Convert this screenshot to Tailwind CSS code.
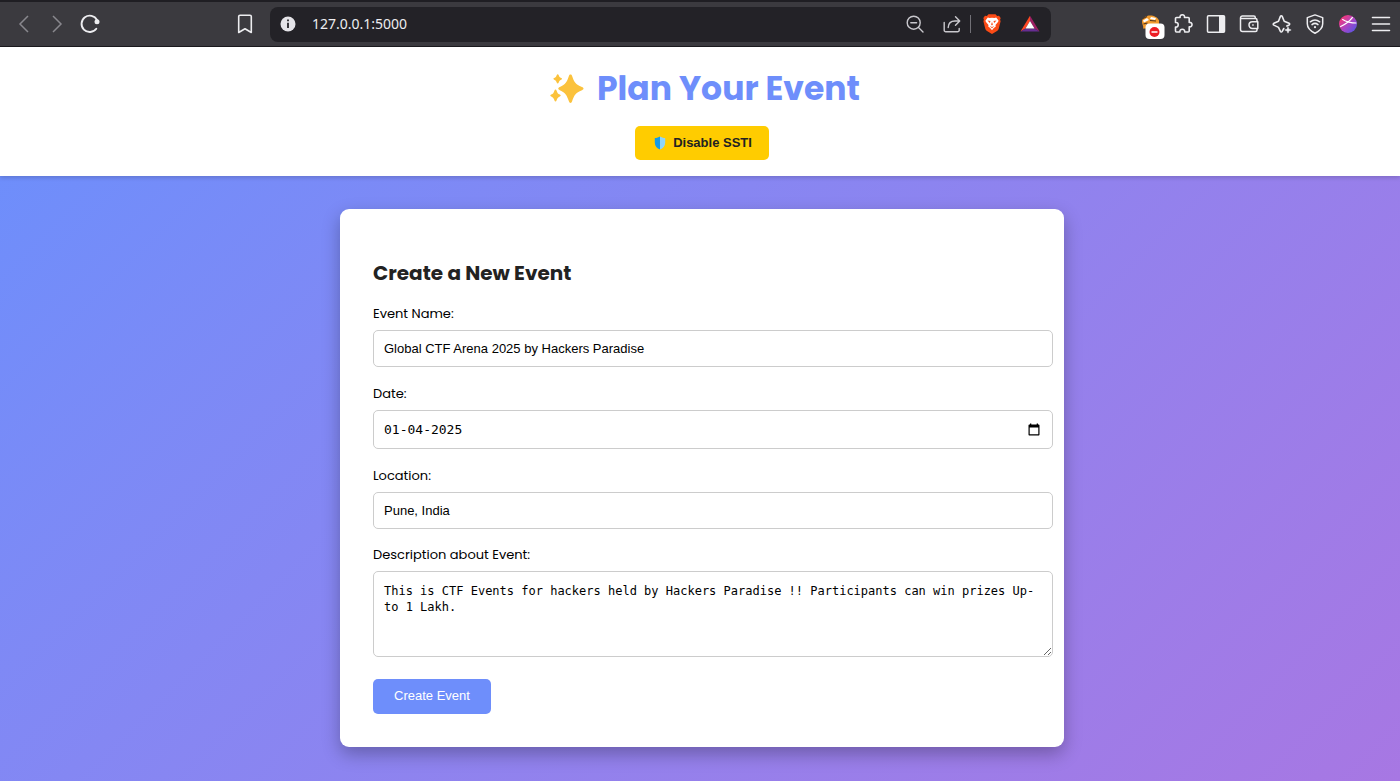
<!DOCTYPE html>
<html lang="en">
<head>
<meta charset="utf-8">
<meta name="viewport" content="width=device-width, initial-scale=1">
<title>Plan Your Event</title>
<script src="https://cdn.jsdelivr.net/npm/@tailwindcss/browser@4"></script>
</head>
<body class="flex min-h-screen flex-col bg-white font-['Poppins','Inter',sans-serif] text-black">

<!-- Browser toolbar -->
<nav aria-label="Browser toolbar" class="flex h-[47px] shrink-0 items-center border-t-2 border-b border-t-[#1f1e23] border-b-[#1b1a1e] bg-[#3b3a3f] text-[#ededf0]">
  <div class="flex w-[270px] shrink-0 items-center pr-[9px] pl-[7px]">
    <button type="button" aria-label="Back" class="flex w-[33px] justify-center text-[#89888e]">
      <svg class="size-5" viewBox="0 0 20 20" fill="none" stroke="currentColor" stroke-width="1.5"><path d="M14 2 6 10l8 8"/></svg>
    </button>
    <button type="button" aria-label="Forward" class="flex w-[33px] justify-center text-[#89888e]">
      <svg class="size-5" viewBox="0 0 20 20" fill="none" stroke="currentColor" stroke-width="1.5"><path d="m6 2 8 8-8 8"/></svg>
    </button>
    <button type="button" aria-label="Reload" class="flex w-[33px] justify-center">
      <svg class="size-5" viewBox="0 0 20 20" fill="none" stroke="currentColor" stroke-width="1.9" stroke-linecap="round"><path d="M16.300 14.800A8.200 8.200 0 1 1 17 6"/><circle cx="17" cy="7.800" r="2.500" fill="currentColor" stroke="none"/></svg>
    </button>
    <button type="button" aria-label="Bookmark" class="ml-auto flex w-[33px] justify-center">
      <svg class="size-5" viewBox="0 0 20 20" fill="none" stroke="currentColor" stroke-width="1.6" stroke-linejoin="round"><path d="M5 1.300h10a1.300 1.300 0 0 1 1.300 1.300v15.900L10 14.800l-6.300 3.700V2.600A1.300 1.300 0 0 1 5 1.300Z"/></svg>
    </button>
  </div>

  <div class="flex h-[35px] min-w-0 flex-1 items-center rounded-lg bg-[#232227] pr-1 pl-2.5">
    <button type="button" aria-label="Site information" class="shrink-0">
      <svg class="size-4" viewBox="0 0 16 16"><circle cx="8" cy="8" r="7.500" fill="#e4e3e8"/><path d="M8 3.400v1.900M8 6.800v5.200" stroke="#232227" stroke-width="1.800"/></svg>
    </button>
    <input aria-label="Address" type="text" value="127.0.0.1:5000" class="ml-4 min-w-0 flex-1 bg-transparent font-['Noto_Sans',sans-serif] text-sm text-[#ededf0] outline-none">
    <button type="button" aria-label="Zoom" class="flex w-[37px] justify-center text-[#c9c8cd]">
      <svg class="size-[18px]" viewBox="0 0 18 18" fill="none" stroke="currentColor" stroke-width="1.400" stroke-linecap="round"><circle cx="7.700" cy="7.700" r="6.500"/><path d="M4.800 7.700h5.800M12.500 12.500l4.500 4.500"/></svg>
    </button>
    <button type="button" aria-label="Share" class="flex w-[37px] justify-center text-[#c9c8cd]">
      <svg class="size-[18px]" viewBox="0 0 18 18" fill="none" stroke="currentColor" stroke-width="1.400" stroke-linecap="round" stroke-linejoin="round"><path d="M1.200 7.500v7.700a1.600 1.600 0 0 0 1.600 1.600h11.800a1.600 1.600 0 0 0 1.600-1.600V13.500"/><path d="M5.200 12.500c.200-4 2.600-6.500 6.800-6.500h4.300M12.500 1.700 16.700 6l-4.200 4.300"/></svg>
    </button>
    <span class="h-[18px] w-px bg-[#717076]"></span>
    <button type="button" aria-label="Brave Shields" class="flex w-[42px] justify-center">
      <svg class="h-5 w-[18px]" viewBox="0 0 18 20"><path fill="#fb4b16" d="M5.500.300h7l1.600 1.700 1.900-.200L17.700 4l-.6 1.700.5 1.600-1.800 7.200c-.3 1.100-.9 1.900-1.800 2.500L9.900 19.600c-.6.400-1.200.400-1.800 0L4 17c-.9-.6-1.500-1.400-1.800-2.500L.4 7.300l.5-1.600L.3 4 2 1.800l1.900.2Z"/><path fill="#fff" d="M9 3.700 6.600 4l-1.800-.4-2.300 3 .3 1.200 2.700 3.100-.3 1.500 2 1.600L9 16.300l1.800-2.300 2-1.600-.3-1.500 2.700-3.100.3-1.200-2.300-3-1.800.4Z"/><path fill="#fb4b16" d="m4.500 6.500 3 .6-.7 1.800ZM13.500 6.500l-3 .6.700 1.800ZM9 8l.9 2.600L9 11.500l-.9-.9ZM6.700 12 9 13l2.300-1L9 14.300Z"/></svg>
    </button>
    <button type="button" aria-label="Brave Rewards" class="flex w-[34px] justify-center">
      <svg class="h-[18px] w-5" viewBox="0 0 20 18"><path fill="#ff4724" d="M10 .8v5.300L5.500 13.500.5 16.500Z"/><path fill="#9e1f63" d="M10 .8v5.300l4.500 7.400 5 3Z"/><path fill="#662d91" d="m.5 16.500 5-3h9l5 3Z"/><path fill="#fff" d="m10 6 4.500 7.500h-9Z"/></svg>
    </button>
  </div>

  <div class="flex w-[349px] shrink-0 items-center justify-end pr-[3px]">
    <button type="button" aria-label="Extension, blocked" class="flex w-6 justify-center">
      <svg class="h-6 w-6 overflow-visible" viewBox="0 0 24 24"><path fill="#f39b2d" d="M2 10c0-4 4-6.500 8-6.500s8 2 9 5v4H6v4H3c1-2-1-4-1-6.500Z"/><path fill="#fff" d="M3 8.500 7 6l2 2-5 2.500ZM11 5l5 1-1 2-5-1Z"/><path stroke="#513620" stroke-width="1.200" fill="none" d="M3 6.500 7 4.500M10 8.500l6 .5M3.500 12l4-1"/><rect x="5.500" y="11.500" width="19" height="15.500" rx="4" fill="#fff"/><circle cx="14.500" cy="20" r="5" fill="#ed1c24"/><path stroke="#fff" stroke-width="1.500" d="M11.500 20h6"/></svg>
    </button>
    <button type="button" aria-label="Extensions" class="ml-0.5 flex w-[33px] justify-center">
      <svg class="size-5" viewBox="0 0 20 20" fill="none" stroke="currentColor" stroke-width="1.600" stroke-linejoin="round"><path d="M3.500 3.500h3.600c-.3-1.700.6-2.700 2.200-2.700s2.500 1 2.200 2.700h3.700a1 1 0 0 1 1 1v3.900c1.800-.3 2.800.6 2.800 2.200s-1 2.500-2.800 2.200v4.200a1 1 0 0 1-1 1h-3.500c.2-1.700-.7-2.700-2.400-2.700s-2.600 1-2.400 2.700H3.500a1 1 0 0 1-1-1v-3.900c1.700.2 2.700-.7 2.700-2.300s-1-2.500-2.700-2.300v-4a1 1 0 0 1 1-1Z"/></svg>
    </button>
    <button type="button" aria-label="Sidebar" class="flex w-[33px] justify-center">
      <svg class="size-5" viewBox="0 0 20 20"><rect x="1.500" y="1.800" width="17" height="16.400" rx="1" fill="none" stroke="currentColor" stroke-width="1.500"/><path fill="currentColor" d="M13 2h5.500v16H13Z"/></svg>
    </button>
    <button type="button" aria-label="Wallet" class="flex w-[33px] justify-center">
      <svg class="size-5" viewBox="0 0 20 20" fill="none" stroke="currentColor" stroke-width="1.500" stroke-linejoin="round"><path d="M18 7.500V6a1.500 1.500 0 0 0-1.500-1.500H1.500V15.500A2 2 0 0 0 3.500 17.500h13A1.500 1.500 0 0 0 18 16v-1.500M1.500 4.800V4a2 2 0 0 1 2-2h11.300a1.500 1.500 0 0 1 1.500 1.500v1M18.800 7.800h-5.500a3.300 3.300 0 0 0 0 6.600h5.500Z"/><path d="M13.200 11.100h1.500"/></svg>
    </button>
    <button type="button" aria-label="Leo AI" class="flex w-[33px] justify-center">
      <svg class="size-5" viewBox="0 0 20 20" fill="none" stroke="currentColor" stroke-width="1.600" stroke-linejoin="round" stroke-linecap="round"><path d="M11.800 14.500 10.200 17.400c-.5.800-1.400.8-1.800 0l-1.900-4-4.600-2.300c-.9-.5-.9-1.400 0-1.800l4.600-2.100 1.900-4.800c.4-.9 1.400-.9 1.800 0l2 4.800 4.900 2.100c.800.400.800 1.200 0 1.700l-2.300 1"/><path fill="currentColor" stroke-width=".5" d="m16 12.800.9 2.300 2.300.9-2.300.9-.9 2.300-.9-2.300-2.300-.9 2.300-.9Z"/></svg>
    </button>
    <button type="button" aria-label="VPN" class="flex w-[33px] justify-center">
      <svg class="size-5" viewBox="0 0 20 20" fill="none" stroke="currentColor" stroke-width="1.500" stroke-linejoin="round" stroke-linecap="round"><path d="m10 .9 7.700 2.700v6.200c0 4-2.800 7.100-7.700 9.400-4.900-2.300-7.700-5.400-7.700-9.400V3.600Z"/><path d="M5.300 7.800c2.800-2.200 6.600-2.200 9.400 0M7 10.600c1.800-1.500 4.200-1.500 6 0"/><circle cx="10" cy="13.200" r="1.100" fill="currentColor" stroke="none"/></svg>
    </button>
    <button type="button" aria-label="Profile" class="flex w-[33px] justify-center">
      <svg class="size-[18px]" viewBox="0 0 18 18"><defs><linearGradient id="orb" x1="0" y1="0" x2="1" y2="1"><stop offset=".15" stop-color="#f0387c"/><stop offset=".55" stop-color="#a545c8"/><stop offset="1" stop-color="#4159e8"/></linearGradient></defs><circle cx="9" cy="9" r="9" fill="url(#orb)"/><path fill="none" stroke="#fff" stroke-width="1.200" d="M1.200 11.700C5 10 10.500 6.500 13.700 2.100M3.200 4.200C7 6.500 12 8 17.400 8"/></svg>
    </button>
    <button type="button" aria-label="Menu" class="flex w-[33px] justify-center">
      <svg class="size-5" viewBox="0 0 20 20" fill="none" stroke="currentColor" stroke-width="1.600" stroke-linecap="round"><path d="M1.500 3.500h17M1.500 10h17M1.500 16.500h17"/></svg>
    </button>
  </div>
</nav>

<!-- Page header -->
<header class="relative flex shrink-0 flex-col items-center bg-white pt-[18px] pb-4 pl-1 shadow-[0_2px_4px_rgba(0,0,0,0.15)]">
  <h1 class="flex h-12 items-center gap-[13px] pl-1.5 text-[33px] leading-[48px] font-bold text-[#6e8efb]">
    <svg aria-hidden="true" class="size-[34px]" viewBox="0 0 34 34" fill="#fbc23c"><path d="M20.500 2.500c.8 0 1.200.5 1.500 1.300 2.300 6.800 3.300 8.300 10 11.200.9.400 1.500.9 1.500 1.600s-.6 1.200-1.500 1.600c-6.700 2.900-7.700 4.600-10 11.400-.3.800-.7 1.300-1.500 1.300s-1.200-.5-1.500-1.300c-2.300-6.800-3.300-8.500-9.200-11.400-.9-.4-1.500-.9-1.500-1.600s.6-1.200 1.500-1.600c5.900-2.900 6.900-4.400 9.200-11.200.3-.8.7-1.300 1.500-1.300Z"/><path d="M7.700 2.200c.5 0 .7.300.9.800.8 2 1 2.300 2.600 3 .5.200.8.400.8.800s-.3.700-.8.900c-1.600.700-1.800 1-2.600 3-.2.500-.4.800-.9.800s-.7-.3-.9-.8c-.8-2-1-2.300-2.600-3-.5-.2-.8-.5-.8-.9s.3-.6.8-.8c1.600-.7 1.800-1 2.600-3 .2-.5.4-.8.900-.8ZM5.500 17.500c.5 0 .8.400 1 .9.900 2.500 1.300 3.200 3.300 4.100.600.300.9.600.9 1s-.3.700-.9 1c-2 .900-2.400 1.600-3.300 4.100-.2.500-.5.900-1 .9s-.8-.4-1-.9c-.9-2.500-1.300-3.200-3.300-4.100-.600-.300-.9-.6-.9-1s.3-.7.900-1c2-.900 2.400-1.600 3.300-4.100.2-.5.500-.9 1-.9Z"/></svg>
    <span>Plan Your Event</span>
  </h1>
  <button type="button" class="mt-[13px] flex h-[34px] items-center gap-[7px] rounded-[5px] bg-[#ffcc00] pr-[17px] pl-[19px] font-['Liberation_Sans',sans-serif] text-[13px] font-bold text-[#222]">
    <svg aria-hidden="true" class="h-[14px] w-3" viewBox="0 0 12 14"><path fill="#129be8" d="M6 .5C4.800 1.400 2.800 2 .8 2v4.500c0 3.600 2.200 5.900 5.200 7Z"/><path fill="#8ed5fb" d="M6 .5C7.200 1.400 9.200 2 11.200 2v4.500c0 3.600-2.200 5.900-5.200 7Z"/></svg>
    Disable SSTI
  </button>
</header>

<main class="flex-1 bg-linear-135 from-[#6e8efb] to-[#a777e3] px-4 pt-[33px] pb-[34px] pl-5">
  <form class="mx-auto flex max-w-[724px] flex-col rounded-[9px] bg-white pt-12 pr-[11px] pb-[33px] pl-[33px] shadow-[0_7px_18px_rgba(0,0,0,0.28)]">
    <h2 class="text-xl leading-8 font-bold text-[#222]">Create a New Event</h2>

    <label for="event-name" class="mt-[13px] text-[13px] leading-6">Event Name:</label>
    <input id="event-name" type="text" value="Global CTF Arena 2025 by Hackers Paradise" class="mt-1 h-[37px] rounded-[5px] border border-[#ccc] px-2.5 font-['Liberation_Sans',sans-serif] text-[13px]">

    <label for="event-date" class="mt-[15px] text-[13px] leading-6">Date:</label>
    <div class="mt-1 flex h-[39px] items-center rounded-[5px] border border-[#ccc] px-2.5">
      <input id="event-date" type="text" inputmode="numeric" value="01-04-2025" class="min-w-0 flex-1 font-['DejaVu_Sans_Mono',monospace] text-[13px] outline-none">
      <button type="button" aria-label="Choose date">
        <svg class="size-4" viewBox="0 0 16 16"><path fill="#000" fill-rule="evenodd" d="M4 1.500h1.300V2.500h5.400V1.500H12v1h.5c.6 0 1 .4 1 1v9c0 .6-.4 1-1 1H3.500c-.6 0-1-.4-1-1v-9c0-.6.4-1 1-1H4Zm-.300 4v6.800h8.600V5.500Z"/></svg>
      </button>
    </div>

    <label for="event-location" class="mt-[15px] text-[13px] leading-6">Location:</label>
    <input id="event-location" type="text" value="Pune, India" class="mt-1 h-[37px] rounded-[5px] border border-[#ccc] px-2.5 font-['Liberation_Sans',sans-serif] text-[13px]">

    <label for="event-description" class="mt-[14px] text-[13px] leading-6">Description about Event:</label>
    <textarea id="event-description" rows="4" class="mt-1 h-[86px] resize-y rounded-[5px] border border-[#ccc] px-2.5 py-[11px] font-['DejaVu_Sans_Mono',monospace] text-xs leading-4">This is CTF Events for hackers held by Hackers Paradise !! Participants can win prizes Up-to 1 Lakh.</textarea>

    <button type="submit" class="mt-[22px] h-[35px] self-start rounded-[5px] bg-[#6e8efb] px-[21px] pb-0.5 font-['Liberation_Sans',sans-serif] text-[13px] text-white">Create Event</button>
  </form>
</main>
</body>
</html>
